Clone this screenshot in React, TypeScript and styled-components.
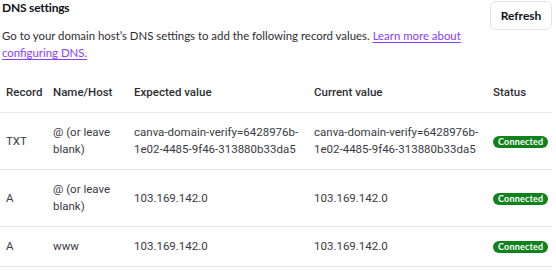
import * as React from "react";
import styled, { createGlobalStyle } from "styled-components";

const GlobalStyle = createGlobalStyle`
  html, body {
    margin: 0;
    padding: 0;
    background: #ffffff;
  }
  body {
    font-family: Lato, "Noto Sans", sans-serif;
    color: #2e2e33;
  }
`;

type DnsRecord = {
  type: string;
  host: string;
  expected: string;
  current: string;
  connected: boolean;
};

const verifyValue = "canva-domain-verify=6428976b-1e02-4485-9f46-313880b33da5";

const records: DnsRecord[] = [
  { type: "TXT", host: "@ (or leave blank)", expected: verifyValue, current: verifyValue, connected: true },
  { type: "A", host: "@ (or leave blank)", expected: "103.169.142.0", current: "103.169.142.0", connected: true },
  { type: "A", host: "www", expected: "103.169.142.0", current: "103.169.142.0", connected: true }
];

const columns = [
  { label: "Record", width: 47 },
  { label: "Name/Host", width: 81 },
  { label: "Expected value", width: 180 },
  { label: "Current value", width: 179 },
  { label: "Status", width: 65 }
];

export default function App() {
  return (
    <Page>
      <GlobalStyle />
      <TopBar>
        <Intro>
          <Title>DNS settings</Title>
          <Description>
            Go to your domain host’s DNS settings to add the following record values.{" "}
            <Link href="#">Learn more about configuring DNS.</Link>
          </Description>
        </Intro>
        <RefreshButton type="button">Refresh</RefreshButton>
      </TopBar>
      <Table>
        <colgroup>
          {columns.map((c) => (
            <col key={c.label} style={{ width: c.width }} />
          ))}
        </colgroup>
        <thead>
          <tr>
            {columns.map((c) => (
              <HeadCell key={c.label}>{c.label}</HeadCell>
            ))}
          </tr>
        </thead>
        <tbody>
          {records.map((r, i) => (
            <tr key={i}>
              <Cell>{r.type}</Cell>
              <Cell>{r.host}</Cell>
              <Cell>{r.expected}</Cell>
              <Cell>{r.current}</Cell>
              <Cell>{r.connected && <Badge>Connected</Badge>}</Cell>
            </tr>
          ))}
        </tbody>
      </Table>
    </Page>
  );
}

const Page = styled.div`
  width: 552px;
`;

const TopBar = styled.div`
  display: flex;
  justify-content: space-between;
  align-items: flex-start;
  padding-top: 1px;
`;

const Intro = styled.div`
  padding-left: 2px;
  width: 462px;
`;

const Title = styled.h2`
  margin: 0;
  font-size: 12px;
  line-height: 14px;
  font-weight: 700;
  letter-spacing: -0.2px;
  color: #0e1318;
`;

const Description = styled.p`
  margin: 12px 0 0;
  font-size: 11.4px;
  line-height: 17px;
  color: #2e2e33;
`;

const Link = styled.a`
  color: #8b3dff;
  text-decoration: underline;
  text-underline-offset: 2px;
`;

const RefreshButton = styled.button`
  height: 29px;
  width: 62px;
  border: 1px solid #e2e3e6;
  border-radius: 6px;
  background: #ffffff;
  font-family: inherit;
  font-size: 12px;
  font-weight: 700;
  color: #0e1318;
  padding: 0;
`;

const Table = styled.table`
  width: 552px;
  margin-top: 12px;
  border-collapse: collapse;
  table-layout: fixed;
  font-family: Roboto, "Liberation Sans", sans-serif;
`;

const HeadCell = styled.th`
  text-align: left;
  font-weight: 500;
  font-size: 11.5px;
  line-height: 17px;
  padding: 11px 6px;
  color: #2e2e33;
  border-bottom: 1px solid #e6e7ea;
`;

const Cell = styled.td`
  text-align: left;
  vertical-align: middle;
  font-size: 11.5px;
  line-height: 17px;
  padding: 11px 6px;
  color: #3a3a3f;
  border-bottom: 1px solid #e6e7ea;
`;

const Badge = styled.span`
  display: inline-block;
  height: 12px;
  line-height: 12px;
  padding: 0 5px;
  border-radius: 6px;
  background: #0f821b;
  color: #ffffff;
  font-family: Lato, sans-serif;
  font-size: 9px;
  font-weight: 700;
  letter-spacing: 0.2px;
  white-space: nowrap;
`;
